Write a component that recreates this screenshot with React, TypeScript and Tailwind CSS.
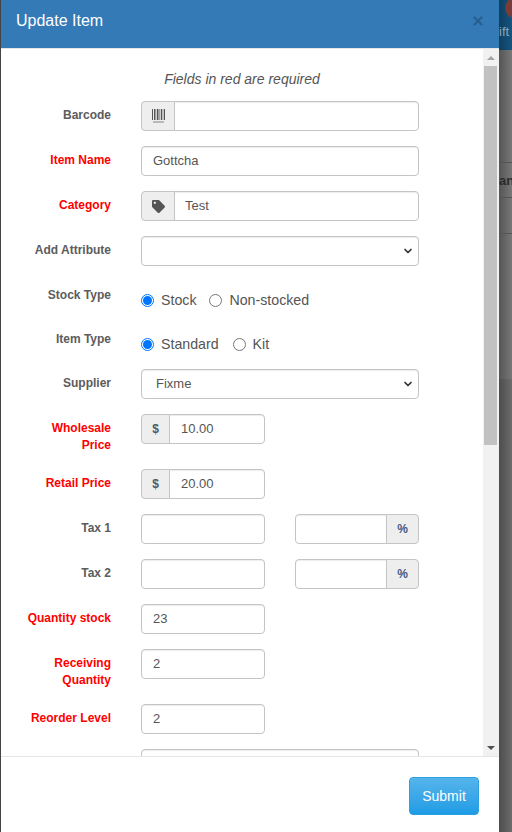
import { ChevronDown, X } from 'lucide-react';
import { FaTag } from 'react-icons/fa';
import { ReactNode } from 'react';

const inputCls =
  'h-[30px] rounded-[4px] border border-[#c4c4c4] bg-white px-[11px] text-[13px] text-[#555] shadow-[inset_0_1px_1px_rgba(0,0,0,0.075)]';

const addonCls =
  'flex h-[30px] shrink-0 items-center justify-center border border-[#c4c4c4] bg-[#eee] text-[12px] font-bold text-[#4f5a66]';

const Label = ({ red, children, className }: { red?: boolean; children: ReactNode; className?: string }) => (
  <div
    className={`w-[110px] shrink-0 pl-[22px] text-right text-[12px] leading-[17px] font-bold ${red ? 'text-[#f00]' : 'text-[#5c5c5c]'} ${className ?? ''}`}
  >
    {children}
  </div>
);

const Text = ({ value }: { value?: string }) => (
  <div className={`${inputCls} flex w-[124px] items-center`}>{value}</div>
);

const Money = ({ value }: { value: string }) => (
  <div className="flex w-[124px]">
    <div className={`${addonCls} w-[29px] rounded-l-[4px]`}>$</div>
    <div className={`${inputCls} -ml-px flex flex-1 items-center rounded-l-none`}>{value}</div>
  </div>
);

const Percent = () => (
  <div className="flex w-[124px]">
    <div className={`${inputCls} flex-1 rounded-r-none`} />
    <div className={`${addonCls} -ml-px w-[33px] rounded-r-[4px] !text-[#3f5a85]`}>%</div>
  </div>
);

const Radio = ({ label, checked }: { label: string; checked?: boolean }) => (
  <div className="flex items-center gap-[7px]">
    {checked ? (
      <span className="flex h-[13px] w-[13px] items-center justify-center rounded-full border border-[#0075ff] bg-white">
        <span className="h-[9px] w-[9px] rounded-full bg-[#0075ff]" />
      </span>
    ) : (
      <span className="h-[13px] w-[13px] rounded-full border border-[#767676] bg-white" />
    )}
    <span className="text-[14.2px] text-[#555]">{label}</span>
  </div>
);

const Tax = ({ label }: { label: string }) => (
  <div className="mt-[15px] flex">
    <Label className="pt-[6px]">{label}</Label>
    <div className="ml-[30px] flex gap-[30px]">
      <Text />
      <Percent />
    </div>
  </div>
);

const BarcodeIcon = () => (
  <svg width="13" height="14" viewBox="0 0 13 14" fill="#555">
    <path d="M0 0h1v11H0zM2 0h1v11H2zM3.5 0h.7v11h-.7zM5 0h1.5v11H5zM7.5 0h.7v11h-.7zM9 0h1v11H9zM10.7 0h.6v11h-.6zM12 0h1v11h-1z" />
    <path d="M1 12.5h11v1H1z" opacity="0.7" />
  </svg>
);

export default function App() {
  return (
    <div className="flex h-[832px] w-[512px] overflow-hidden bg-[#555] font-['Liberation_Sans',Arial,sans-serif]">
      <div className="flex h-full w-[499px] shrink-0 flex-col border-l border-[#444] bg-white">
        {/* Header */}
        <div className="flex h-[49px] shrink-0 items-center justify-between border-b border-[#e5e5e5] bg-[#337ab7] px-[15px] pb-[7px]">
          <h4 className="text-[16px] leading-[28px] font-normal text-white">Update Item</h4>
          <X className="mr-[-1px] h-[14px] w-[14px] text-[#28608f]" strokeWidth={4} />
        </div>

        {/* Body */}
        <div className="flex min-h-0 flex-1">
          <div className="min-w-0 flex-1 overflow-hidden">
            <p className="mt-[22px] text-center text-[14px] leading-[17px] text-[#555] italic">
              Fields in red are required
            </p>

            <div className="mt-[13px] flex">
              <Label className="pt-[6px]">Barcode</Label>
              <div className="ml-[30px] flex w-[278px]">
                <div className={`${addonCls} w-[34px] rounded-l-[4px]`}>
                  <BarcodeIcon />
                </div>
                <div className={`${inputCls} -ml-px flex-1 rounded-l-none`} />
              </div>
            </div>

            <div className="mt-[15px] flex">
              <Label red className="pt-[6px]">Item Name</Label>
              <div className={`${inputCls} ml-[30px] flex w-[278px] items-center`}>Gottcha</div>
            </div>

            <div className="mt-[15px] flex">
              <Label red className="pt-[6px]">Category</Label>
              <div className="ml-[30px] flex w-[278px]">
                <div className={`${addonCls} w-[34px] rounded-l-[4px]`}>
                  <FaTag className="h-[13px] w-[13px] text-[#555]" />
                </div>
                <div className={`${inputCls} -ml-px flex flex-1 items-center rounded-l-none !pl-[10px]`}>Test</div>
              </div>
            </div>

            <div className="mt-[15px] flex">
              <Label className="pt-[6px]">Add Attribute</Label>
              <div className={`${inputCls} ml-[30px] flex w-[278px] items-center justify-end !pr-[4px]`}>
                <ChevronDown className="h-[12px] w-[12px] text-[#333]" strokeWidth={3.5} />
              </div>
            </div>

            <div className="mt-[21px] flex h-[24px]">
              <Label>Stock Type</Label>
              <div className="ml-[30px] flex h-[30px] items-center gap-[13px] pb-[2px]">
                <Radio label="Stock" checked />
                <Radio label="Non-stocked" />
              </div>
            </div>

            <div className="mt-[20px] flex h-[24px]">
              <Label>Item Type</Label>
              <div className="ml-[30px] flex h-[30px] items-center gap-[14px] pb-[2px]">
                <Radio label="Standard" checked />
                <Radio label="Kit" />
              </div>
            </div>

            <div className="mt-[14px] flex">
              <Label className="pt-[6px]">Supplier</Label>
              <div className={`${inputCls} ml-[30px] flex w-[278px] items-center justify-between !pr-[4px]`}>
                <span className="pl-[3px]">Fixme</span>
                <ChevronDown className="h-[12px] w-[12px] text-[#333]" strokeWidth={3.5} />
              </div>
            </div>

            <div className="mt-[15px] flex h-[40px]">
              <Label red className="pt-[6px]">Wholesale Price</Label>
              <div className="ml-[30px]">
                <Money value="10.00" />
              </div>
            </div>

            <div className="mt-[15px] flex">
              <Label red className="pt-[6px]">Retail Price</Label>
              <div className="ml-[30px]">
                <Money value="20.00" />
              </div>
            </div>

            <Tax label="Tax 1" />
            <Tax label="Tax 2" />

            <div className="mt-[15px] flex">
              <Label red className="pt-[6px]">Quantity stock</Label>
              <div className="ml-[30px]">
                <Text value="23" />
              </div>
            </div>

            <div className="mt-[15px] flex h-[40px]">
              <Label red className="pt-[6px]">Receiving Quantity</Label>
              <div className="ml-[30px]">
                <Text value="2" />
              </div>
            </div>

            <div className="mt-[15px] flex">
              <Label red className="pt-[6px]">Reorder Level</Label>
              <div className="ml-[30px]">
                <Text value="2" />
              </div>
            </div>

            <div className={`${inputCls} mt-[15px] ml-[140px] w-[278px]`} />
          </div>

          {/* Scrollbar */}
          <div className="flex w-[16px] shrink-0 flex-col bg-[#f1f1f1]">
            <div className="flex h-[17px] w-full items-center justify-center">
              <span className="h-0 w-0 border-r-[4px] border-b-[4px] border-l-[4px] border-r-transparent border-b-[#a3a3a3] border-l-transparent" />
            </div>
            <div className="ml-[1px] h-[379px] w-[13px] bg-[#c1c1c1]" />
            <div className="flex-1" />
            <div className="flex h-[17px] w-full items-center justify-center">
              <span className="h-0 w-0 border-t-[4px] border-r-[4px] border-l-[4px] border-t-[#505050] border-r-transparent border-l-transparent" />
            </div>
          </div>
        </div>

        {/* Footer */}
        <div className="flex h-[76px] shrink-0 items-start justify-end border-t border-[#e5e5e5] bg-white pt-[20px] pr-[20px]">
          <button className="h-[38px] w-[70px] rounded-[4px] border border-[#2a9fe0] bg-gradient-to-b from-[#54b4eb] to-[#1d9ce5] text-[14px] text-white">
            Submit
          </button>
        </div>
      </div>

      {/* Page behind the backdrop */}
      <div className="relative flex min-w-0 flex-1 flex-col overflow-hidden bg-gradient-to-r from-[#555] to-[#787878] text-[13px]">
        <div className="h-[50px] shrink-0 bg-gradient-to-r from-[#0e3f60] to-[#15557f] pt-[22px] text-[#8fa6b5]">
          ift
        </div>
        <span className="absolute top-[-2px] left-[6px] h-[20px] w-[20px] rounded-full bg-[#7a3b3b]" />
        <div className="h-[113px] shrink-0 border-b border-[#555]" />
        <div className="h-[35px] shrink-0 border-b border-[#555] pt-[8px] font-bold text-[#2b2b2b]">an</div>
        <div className="h-[36px] shrink-0 border-b border-[#555]" />
        <div className="h-[145px] shrink-0" />
        <div className="flex-1 bg-gradient-to-r from-[#4d4d4d] to-[#6c6c6c]" />
      </div>
    </div>
  );
}
